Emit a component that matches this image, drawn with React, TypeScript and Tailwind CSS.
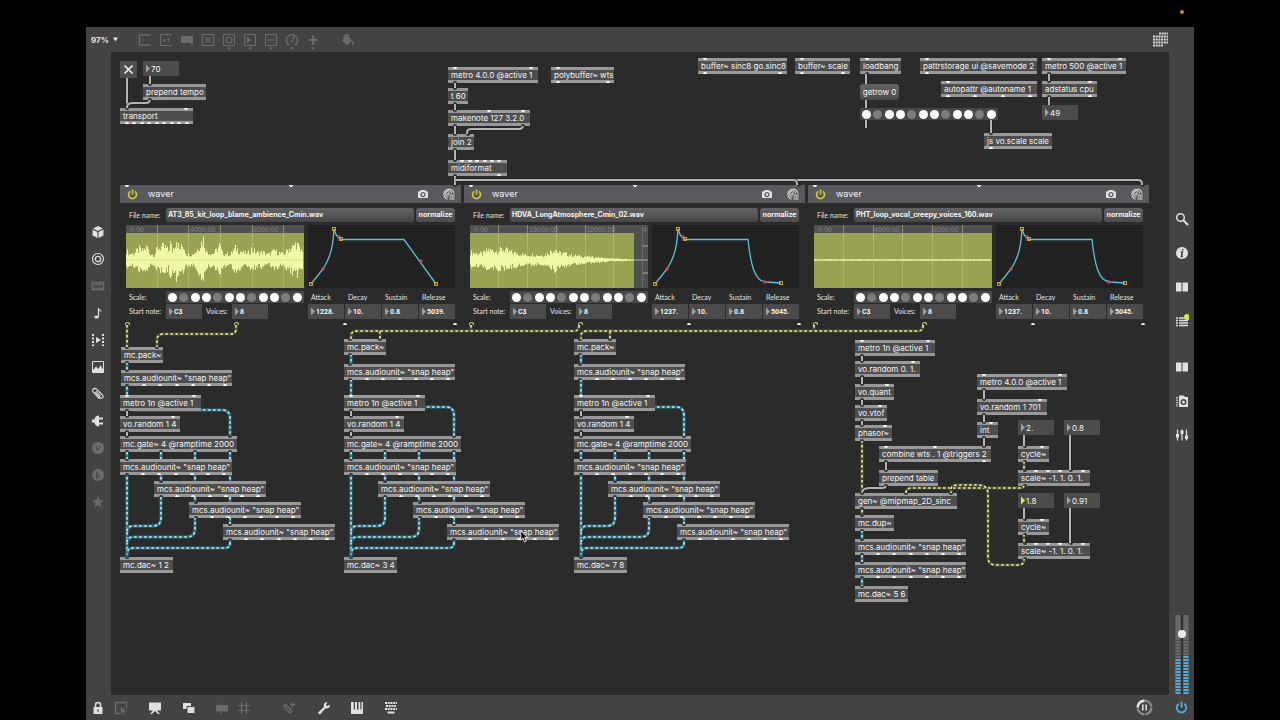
import type { ReactNode } from "react"

const ORIGIN = { x: 111, y: 52 }
const SCALE = [1, 0, 1, 1, 0, 1, 1, 0, 1, 1, 0, 1]
const AU = 'mcs.audiounit~ "snap heap"'
const AU_OUTS = [23, 39, 56, 72, 88, 104]

type Obj = {
  x: number
  y: number
  w: number
  text: string
  ins?: number[]
  outs?: number[]
  cin?: number[]
  cout?: number[]
}

type Kind = "data" | "audio" | "multi"
type Cord = { d: string; kind: Kind }

const at = (x: number, y: number) => ({ left: x - ORIGIN.x, top: y - ORIGIN.y })

function voice(dx: number, dy: number, dac: string): Obj[] {
  const x = 120 + dx
  const px = dx === 0 ? x + 1 : x
  return [
    { x: px, y: 347 + dy, w: 42, text: "mc.pack~", cin: [6, 36], cout: [6] },
    { x: px, y: 370 + dy * 0.75, w: 111, text: AU, cin: [6], cout: [6], outs: AU_OUTS },
    { x, y: 395, w: 81, text: "metro 1n @active 1", ins: [7, 74], cout: [7] },
    { x, y: 416, w: 60, text: "vo.random 1 4", cin: [7], ins: [53], cout: [7] },
    { x, y: 436, w: 117, text: "mc.gate~ 4 @ramptime 2000", cin: [7, 110], cout: [7, 41, 75, 110] },
    { x, y: 459, w: 112, text: AU, cin: [7], cout: [7], outs: AU_OUTS },
    { x: x + 34, y: 481, w: 112, text: AU, cin: [7], cout: [7], outs: AU_OUTS },
    { x: x + 69, y: 502, w: 112, text: AU, cin: [7], cout: [7], outs: AU_OUTS },
    { x: x + 103, y: 524, w: 112, text: AU, cin: [7], cout: [7], outs: AU_OUTS },
    { x, y: 557, w: 53, text: dac, cin: [7] },
  ]
}

function voiceCords(dx: number, dy: number): Cord[] {
  const a = 127 + dx
  const b = a + 34
  const c = a + 68
  const d = a + 103
  const gy = dx === 0 ? 410 : 407
  return [
    { kind: "multi", d: `M${a} ${362 + dy}V395` },
    { kind: "data", d: `M${a} 411V436` },
    { kind: "multi", d: `M${a + 6} ${gy}H${d - 8}Q${d} ${gy} ${d} ${gy + 8}V436` },
    { kind: "multi", d: `M${a} 452V557` },
    { kind: "multi", d: `M${b} 452V518Q${b} 526 ${b - 8} 526H${a + 6}Q${a} 526 ${a} 532` },
    { kind: "multi", d: `M${c} 452V529Q${c} 537 ${c - 8} 537H${a + 6}Q${a} 537 ${a} 543` },
    { kind: "multi", d: `M${d} 452V543Q${d} 548 ${d - 5} 548H${a + 6}Q${a} 548 ${a} 554` },
  ]
}

const objects: Obj[] = [
  { x: 143, y: 84, w: 63, text: "prepend tempo", cin: [7], cout: [7] },
  { x: 120, y: 108, w: 73, text: "transport", cin: [7], ins: [66], outs: [7, 14, 22, 29, 37, 44, 52, 59, 67] },
  { x: 448, y: 67, w: 90, text: "metro 4.0.0 @active 1", ins: [7, 83], cout: [7] },
  { x: 551, y: 67, w: 63, text: "polybuffer~ wts", ins: [7], outs: [7, 57] },
  { x: 448, y: 88, w: 20, text: "t 60", cin: [7], cout: [7] },
  { x: 448, y: 110, w: 82, text: "makenote 127 3.2.0", cin: [7], ins: [41, 75], cout: [7, 75] },
  { x: 448, y: 134, w: 26, text: "join 2", cin: [7, 20], cout: [7] },
  { x: 448, y: 160, w: 59, text: "midiformat", cin: [7], ins: [14, 22, 29, 37, 44, 51], cout: [7], outs: [51] },
  { x: 698, y: 58, w: 89, text: "buffer~ sinc8 go.sinc8", ins: [7], outs: [7, 82] },
  { x: 795, y: 58, w: 55, text: "buffer~ scale", ins: [7], outs: [7, 48] },
  { x: 860, y: 58, w: 41, text: "loadbang", ins: [7], cout: [7] },
  { x: 920, y: 58, w: 117, text: "pattrstorage ui @savemode 2", ins: [7], outs: [7] },
  { x: 941, y: 81, w: 96, text: "autopattr @autoname 1", ins: [7], outs: [7, 34, 62, 89] },
  { x: 984, y: 133, w: 68, text: "js vo.scale scale", cin: [7], outs: [7] },
  { x: 1042, y: 58, w: 84, text: "metro 500 @active 1", ins: [7, 78], cout: [7] },
  { x: 1042, y: 81, w: 55, text: "adstatus cpu", cin: [7], ins: [48], cout: [7], outs: [48] },
  ...voice(0, 0, "mc.dac~ 1 2"),
  ...voice(224, -8, "mc.dac~ 3 4"),
  ...voice(454, -8, "mc.dac~ 7 8"),
  { x: 855, y: 340, w: 80, text: "metro 1n @active 1", ins: [7, 73], cout: [7] },
  { x: 855, y: 361, w: 65, text: "vo.random 0. 1.", cin: [7], ins: [58], cout: [7] },
  { x: 855, y: 384, w: 39, text: "vo.quant", cin: [7], ins: [32], cout: [7] },
  { x: 855, y: 405, w: 32, text: "vo.vtof", cin: [7], ins: [25], cout: [7] },
  { x: 855, y: 425, w: 37, text: "phasor~", cin: [7], ins: [30], cout: [7] },
  { x: 879, y: 446, w: 112, text: "combine wts . 1 @triggers 2", ins: [7, 56], cin: [105], cout: [7], outs: [105] },
  { x: 879, y: 470, w: 59, text: "prepend table", cin: [7], cout: [7] },
  { x: 855, y: 493, w: 102, text: "gen~ @mipmap_2D_sinc", cin: [7, 51, 96], cout: [7] },
  { x: 855, y: 515, w: 39, text: "mc.dup~", cin: [7], cout: [7] },
  { x: 855, y: 539, w: 111, text: AU, cin: [7], cout: [7], outs: AU_OUTS },
  { x: 855, y: 562, w: 111, text: AU, cin: [7], cout: [7], outs: AU_OUTS },
  { x: 855, y: 586, w: 53, text: "mc.dac~ 5 6", cin: [7] },
  { x: 977, y: 374, w: 90, text: "metro 4.0.0 @active 1", ins: [7, 83], cout: [7] },
  { x: 977, y: 399, w: 70, text: "vo.random 1 701", cin: [7], ins: [63], cout: [7] },
  { x: 977, y: 422, w: 21, text: "int", cin: [7], ins: [14], cout: [7] },
  { x: 1018, y: 446, w: 31, text: "cycle~", cin: [7], ins: [24], cout: [7] },
  { x: 1018, y: 470, w: 72, text: "scale~ -1. 1. 0. 1.", cin: [7, 53], ins: [18, 30, 42, 65], cout: [7] },
  { x: 1018, y: 519, w: 31, text: "cycle~", cin: [7], ins: [24], cout: [7] },
  { x: 1018, y: 543, w: 72, text: "scale~ -1. 1. 0. 1.", cin: [7, 53], ins: [18, 30, 42, 65], cout: [7] },
]

const cords: Cord[] = [
  { kind: "data", d: "M127 77V109" },
  { kind: "data", d: "M150 76V85" },
  { kind: "data", d: "M150 99Q150 103 146 103H133Q127 103 127 107" },
  { kind: "data", d: "M455 82V188" },
  { kind: "data", d: "M523 125Q523 129 519 129H471Q467 129 467 133V136" },
  { kind: "data", d: "M455 180H1138Q1142 180 1142 184V186" },
  { kind: "data", d: "M793 180Q797 180 797 184V186" },
  { kind: "data", d: "M866 73V128" },
  { kind: "data", d: "M991 119V134" },
  { kind: "data", d: "M1049 73V106" },
  { kind: "audio", d: "M127 325V347" },
  { kind: "audio", d: "M236 325V329Q236 334 231 334H163Q157 334 157 340V347" },
  { kind: "audio", d: "M471 325V331" },
  { kind: "audio", d: "M579 325V326Q579 331 574 331H357Q351 331 351 336V340" },
  { kind: "audio", d: "M380 331V340" },
  { kind: "audio", d: "M814 325V331" },
  { kind: "audio", d: "M923 325V326Q923 331 918 331H587Q581 331 581 336V340" },
  { kind: "audio", d: "M610 331V340" },
  ...voiceCords(0, 0),
  ...voiceCords(224, -8),
  ...voiceCords(454, -8),
  { kind: "data", d: "M862 355V426" },
  { kind: "audio", d: "M862 440V516" },
  { kind: "multi", d: "M862 530V587" },
  { kind: "data", d: "M984 389V447" },
  { kind: "data", d: "M886 461V471" },
  { kind: "data", d: "M886 485Q886 488 882 488H870Q863 488 862 492" },
  { kind: "data", d: "M1024 434V447" },
  { kind: "audio", d: "M1024 461V471" },
  { kind: "data", d: "M1070 434V471" },
  { kind: "data", d: "M1024 507V520" },
  { kind: "audio", d: "M1024 534V544" },
  { kind: "data", d: "M1070 507V544" },
  { kind: "audio", d: "M1024 485Q1024 488 1020 488H911Q906 488 906 493" },
  { kind: "audio", d: "M1024 558V560Q1024 565 1018 565H996Q988 565 988 557V494Q988 485 978 485H957Q951 485 951 490V493" },
]

const numbers = [
  { x: 143, y: 61, value: "70" },
  { x: 1042, y: 105, value: "49" },
  { x: 1018, y: 420, value: "2." },
  { x: 1064, y: 420, value: "0.8" },
  { x: 1018, y: 493, value: "1.8", active: true },
  { x: 1064, y: 493, value: "0.91" },
]

function Ports({ list, edge, dark }: { list?: number[]; edge: "top" | "bottom"; dark?: boolean }) {
  return (
    <>
      {list?.map((p) => (
        <i
          key={p}
          className={`absolute h-[2px] w-1 ${edge === "top" ? "top-0 rounded-b-full" : "bottom-0 rounded-t-full"} ${
            dark ? "bg-[#333]" : "bg-white"
          }`}
          style={{ left: p - 2 }}
        />
      ))}
    </>
  )
}

function ObjectBox({ o }: { o: Obj }) {
  return (
    <div
      className="absolute h-4 whitespace-nowrap border-y-[3px] border-[#989898] bg-[#4e4e4e] pl-[3px] text-[8px] leading-[10px] text-[#f6f6f6]"
      style={{ ...at(o.x, o.y), width: o.w }}
    >
      {o.text}
      <div className="absolute inset-x-0 -inset-y-[3px]">
        <Ports list={o.ins} edge="top" />
        <Ports list={o.cin} edge="top" dark />
        <Ports list={o.outs} edge="bottom" />
        <Ports list={o.cout} edge="bottom" dark />
      </div>
    </div>
  )
}

const cordColors: Record<Kind, [string, string]> = {
  data: ["#1e1e1e", "#b4b4b0"],
  audio: ["#50532c", "#eef0b8"],
  multi: ["#2f7288", "#c9e8ee"],
}

function Cords() {
  return (
    <svg className="absolute left-0 top-0" width="1058" height="643" viewBox="111 52 1058 643" fill="none">
      {cords.map((c, i) => (
        <g key={i}>
          <path d={c.d} stroke={cordColors[c.kind][0]} strokeWidth={3} />
          <path
            d={c.d}
            stroke={cordColors[c.kind][1]}
            strokeWidth={c.kind === "data" ? 2 : 1.6}
            strokeDasharray={c.kind === "data" ? undefined : "2.5 2.5"}
          />
        </g>
      ))}
    </svg>
  )
}

function NumberBox({ label, value, bold, active }: { label: string; value: string; bold?: boolean; active?: boolean }) {
  return (
    <div className="flex h-[15px] w-9 items-center bg-[#4b4b4b]">
      <svg width="8" height="9" viewBox="0 0 8 9" className="shrink-0">
        <path d="M3 0.5 7 4.5 3 8.5Z" fill={active ? "#dcee4a" : "#a0a0a0"} />
      </svg>
      <input
        aria-label={label}
        defaultValue={value}
        className={`w-7 min-w-0 bg-transparent p-0 leading-[10px] text-[#f6f6f6] outline-none ${
          bold ? "font-['Roboto',sans-serif] text-[7px] font-bold" : "text-[8px]"
        }`}
      />
    </div>
  )
}

function ScaleRow({ name }: { name: string }) {
  return (
    <div className="flex h-3 w-[138px] items-center justify-around bg-[#474747] px-px">
      {SCALE.map((on, i) => (
        <input
          key={i}
          type="checkbox"
          aria-label={`${name} note ${i + 1}`}
          defaultChecked={on === 1}
          className="size-[9px] appearance-none rounded-full bg-[#7c7c7c] checked:bg-white"
        />
      ))}
    </div>
  )
}

type WaverProps = {
  x: number
  file: string
  wave: number[][]
  grid: number[]
  ticks: [number, string][]
  selection: number
  attack: string
  release: string
  linear?: boolean
}

// same value for the same x, so the wave shape is stable between renders
function noise(n: number) {
  const v = Math.sin(n * 12.9898) * 43758.5453
  return v - Math.floor(v)
}

function wavePath(points: number[][]) {
  let d = ""
  for (let i = 1; i < points.length; i++) {
    const [x0, a0] = points[i - 1]
    const [x1, a1] = points[i]
    for (let x = x0; x < x1; x++) {
      const amp = a0 + ((a1 - a0) * (x - x0)) / (x1 - x0)
      const up = amp * (0.45 + 0.6 * noise(x))
      const down = amp * (0.4 + 0.55 * noise(x + 400))
      d += `M${x + 0.5} ${(35 - up).toFixed(1)}V${(35 + down).toFixed(1)}`
    }
  }
  return d
}

const wavers: WaverProps[] = [
  {
    x: 120,
    file: "AT3_85_kit_loop_blame_ambience_Cmin.wav",
    wave: [
      [0, 12], [3, 8], [8, 9], [13, 14], [16, 12], [21, 17], [23, 9], [28, 6], [31, 15], [35, 17], [39, 16], [42, 12],
      [44, 22], [46, 12], [50, 28], [53, 14], [57, 19], [60, 8], [66, 7], [70, 12], [75, 23], [77, 27], [80, 11],
      [86, 8], [90, 12], [93, 19], [96, 9], [104, 7], [109, 15], [113, 12], [118, 9], [121, 8], [125, 14], [131, 9],
      [136, 10], [142, 7], [148, 12], [153, 9], [157, 7], [162, 14], [167, 17], [170, 22], [174, 12], [177, 16],
    ],
    grid: [31, 62, 94, 126, 157],
    ticks: [[2, "-0.00"], [64, "4000.00 :"], [127, "8000.00 :"]],
    selection: 177,
    attack: "1228.",
    release: "5039.",
    linear: true,
  },
  {
    x: 464,
    file: "HDVA_LongAtmosphere_Cmin_02.wav",
    wave: [
      [0, 10], [5, 9], [12, 8], [18, 13], [22, 12], [28, 12], [33, 14], [38, 11], [44, 9], [50, 8], [56, 6], [62, 7],
      [70, 6], [76, 7], [80, 11], [85, 15], [88, 9], [95, 8], [102, 6], [110, 5], [120, 4], [130, 3], [140, 2],
      [150, 1.5], [158, 1], [164, 0.6],
    ],
    grid: [28, 57, 86, 115, 143, 172],
    ticks: [[2, "-0.00"], [59, "16000.00"], [116, "32000.00"], [173, "4"]],
    selection: 164,
    attack: "1237.",
    release: "5045.",
  },
  {
    x: 808,
    file: "PHT_loop_vocal_creepy_voices_160.wav",
    wave: [[0, 1], [177, 1]],
    grid: [29, 59, 88, 118, 148],
    ticks: [[2, "-0.00"], [60, "4000.00"], [119, "8000.00"]],
    selection: 177,
    attack: "1237.",
    release: "5045.",
  },
]

function Waveform({ wave, grid, ticks, selection }: WaverProps) {
  return (
    <svg width="178" height="63" viewBox="0 0 178 63" className="bg-[#505050]">
      {ticks.map(([x, t]) => (
        <text key={t} x={x} y="7" className="fill-[#838383] font-['Liberation_Sans',sans-serif] text-[7px]">
          {t}
        </text>
      ))}
      <rect x="0" y="8" width={selection === 177 ? 178 : selection} height="55" fill="#99a252" />
      {grid.map((x) => (
        <path key={x} d={`M${x + 0.5} 0V63`} stroke={x > selection ? "#858585" : "#c4cb88"} strokeOpacity="0.5" />
      ))}
      {selection < 177 && <path d="M164 35H178M173 21H178M173 48H178" stroke="#a9a9a9" />}
      <path d={wavePath(wave)} stroke="#eff8a4" strokeWidth="1.1" />
      {selection === 177 && <path d="M0 35H177" stroke="#d8e47c" />}
    </svg>
  )
}

function Envelope({ linear }: { linear?: boolean }) {
  const tail = linear ? "L128 59" : "C99 42 103 56 114 57L129 58"
  const handles = [[3, 59], [26, 4], [33, 14], linear ? [128, 59] : [129, 58]]
  const bends = [[15, 44], [31, 12], linear ? [113, 36] : [113, 57]]
  return (
    <svg width="147" height="63" viewBox="0 0 147 63" fill="none" className="bg-[#222]">
      <path d={`M3 59L15 44C23 32 25 20 26 4Q28 12 33 14.5H96${tail}`} stroke="#5cc0d6" strokeWidth="1.3" />
      {bends.map(([x, y]) => (
        <circle key={x} cx={x} cy={y} r="1.7" fill="#c8475c" />
      ))}
      {handles.map(([x, y]) => (
        <rect key={x} x={x - 1.5} y={y - 1.5} width="3" height="3" stroke="#d0a030" strokeWidth="1" />
      ))}
    </svg>
  )
}

function PowerIcon({ className, size = 11 }: { className: string; size?: number }) {
  return (
    <svg width={size} height={size} viewBox="0 0 12 12" fill="none" stroke="currentColor" strokeWidth="1.7" className={className}>
      <path d="M3.4 2.6A4.4 4.4 0 1 0 8.6 2.6M6 0.5V6" />
    </svg>
  )
}

function Waver(props: WaverProps) {
  const { x, file, attack, release } = props
  const params = [
    ["Attack", attack],
    ["Decay", "10."],
    ["Sustain", "0.8"],
    ["Release", release],
  ]
  return (
    <section className="absolute w-[341px] font-['Lato',sans-serif] text-[7px] text-[#e4e4e4]" style={at(x, 185)}>
      <header className="relative flex h-[18px] items-center bg-[#5a595d] pl-[7px] pr-[6px]">
        <PowerIcon className="text-[#d3cc3a]" />
        <h2 className="ml-[10px] font-['Inter',sans-serif] text-[9px] text-[#f2f2f2]">waver</h2>
        <button aria-label="Snapshot" className="ml-auto mr-[14px]">
          <svg width="12" height="10" viewBox="0 0 12 10">
            <path
              fillRule="evenodd"
              d="M4 1H8L9 2.2H10Q11 2.2 11 3.2V8Q11 9 10 9H2Q1 9 1 8V3.2Q1 2.2 2 2.2H3ZM6 3A2.6 2.6 0 1 0 6 8.2A2.6 2.6 0 1 0 6 3ZM6 4.2A1.4 1.4 0 1 1 6 7A1.4 1.4 0 1 1 6 4.2Z"
              fill="#e2e2e2"
            />
          </svg>
        </button>
        <button aria-label="Presets">
          <svg width="12" height="12" viewBox="0 0 12 12" fill="none" stroke="#dedede" strokeWidth="1.1">
            <path d="M4.5 11A5 5 0 1 1 11 5.5M5 8.7A3 3 0 1 1 8.6 5M6 7A1 1 0 1 1 6.6 5.5M6.5 7H11.5M6.5 9H11.5M6.5 11H11.5" />
          </svg>
        </button>
        <Ports list={[7, 171]} edge="top" />
        <Ports list={[335]} edge="top" dark />
      </header>
      <div className="mt-[5px] flex h-[14px] items-center pl-[9px]">
        <span className="w-[37px]">File name:</span>
        <button className="h-full w-[248px] rounded-[3px] bg-linear-to-b from-[#636363] to-[#484848] pl-[2px] text-left font-['Inter',sans-serif] font-bold text-[#f4f4f4]">
          {file}
        </button>
        <button className="ml-[2px] h-full w-[39px] rounded-[3px] bg-linear-to-b from-[#636363] to-[#4c4c4c] font-['Inter',sans-serif] font-bold text-[#f4f4f4]">
          normalize
        </button>
      </div>
      <div className="mt-[3px] flex gap-1 pl-[6px]">
        <Waveform {...props} />
        <Envelope linear={props.linear} />
      </div>
      <div className="mt-[3px] flex gap-1 pl-[6px]">
        <div className="w-[178px] pl-[3px]">
          <div className="flex items-center">
            <span className="w-[37px]">Scale:</span>
            <ScaleRow name={file} />
          </div>
          <div className="mt-px flex items-center">
            <span className="w-[37px] whitespace-nowrap">Start note:</span>
            <NumberBox label="Start note" value="C3" bold />
            <span className="ml-[4px] w-[26px]">Voices:</span>
            <NumberBox label="Voices" value="8" bold />
          </div>
        </div>
        <div className="flex gap-px">
          {params.map(([name, value]) => (
            <label key={name}>
              <span className="block h-3 pl-[3px] leading-3">{name}</span>
              <div className="mt-px">
                <NumberBox label={name} value={value} bold />
              </div>
            </label>
          ))}
        </div>
      </div>
      <div className="relative mt-[4px] h-[2px]">
        <Ports list={[225, 335]} edge="bottom" />
        {[7, 116].map((p) => (
          <i
            key={p}
            className="absolute bottom-0 h-[3px] w-[5px] rounded-t-full border border-b-0 border-[#c9cd7c]"
            style={{ left: p - 2 }}
          />
        ))}
      </div>
    </section>
  )
}

function Icon({ children, dim, size = 14 }: { children: ReactNode; dim?: boolean; size?: number }) {
  return (
    <svg width={size} height={size} viewBox="0 0 14 14" fill="none" stroke="currentColor" className={dim ? "text-[#6c6c6c]" : "text-[#e0e0e0]"}>
      {children}
    </svg>
  )
}

function ToolButton({ label, className = "", children }: { label: string; className?: string; children: ReactNode }) {
  return (
    <button aria-label={label} className={`flex items-center justify-center ${className}`}>
      {children}
    </button>
  )
}

const caret = <path d="M5 14.5H9L7 17Z" fill="currentColor" stroke="none" />

const toolbar: [string, ReactNode][] = [
  ["Object", <path d="M1.5 1V13M3 2H12.500M3 12H12.500" strokeWidth="1.400" />],
  ["Message", <path d="M12.5 1.5H1.5V12.5H12.5M4 9 5.500 6 6.500 9M8 6H11M9.500 6V9" />],
  ["Comment", <path d="M1 3H13V10H12.500V12.500L10 10H1Z" fill="currentColor" stroke="none" />],
  ["Toggle", <path d="M1.5 1.5H12.5V12.5H1.5ZM4.500 4.500 9.500 9.500M9.500 4.500 4.500 9.500" strokeWidth="1.200" />],
  ["Button", <><path d="M1.5 1.5H12.5V12.5H1.5Z" /><circle cx="7" cy="7" r="3" strokeWidth="1.200" />{caret}</>],
  ["Number", <><path d="M1.5 1.5H12.5V12.5H1.5Z" /><path d="M4 4.500 7.500 7 4 9.500Z" fill="currentColor" />{caret}</>],
  ["Slider", <><path d="M1.5 1.5H12.5V12.5H1.5ZM3.500 7H10.500" />{caret}</>],
  ["Dial", <><path d="M4 12.200A5.700 5.700 0 1 1 10 12.200M6.500 9.500 9.500 3.500" strokeWidth="1.400" />{caret}</>],
  ["Add", <><path d="M7 2.500V11.500M2.500 7H11.500" strokeWidth="2.200" />{caret}</>],
]

const leftIcons: [string, ReactNode, boolean?][] = [
  ["Packages", <path d="M7 1 12 3.500 7 6 2 3.500ZM1.500 4.500 6.500 7V13L1.500 10.500ZM12.500 4.500 7.500 7V13L12.500 10.500Z" fill="currentColor" stroke="none" />],
  ["Objects", <><circle cx="7" cy="7" r="5.500" strokeWidth="1.200" /><circle cx="7" cy="7" r="2.700" strokeWidth="1.300" /></>],
  ["Devices", <path d="M1.500 3.500H12.500V10.500H1.500ZM3 5.500H11M3 9H4M5.500 9H6.500M8 9H9M10 9H11" strokeWidth="1.500" />, true],
  ["Audio", <><path d="M7.500 11V2Q8 4.500 10.500 5.500" strokeWidth="1.200" /><ellipse cx="5.500" cy="11" rx="2.200" ry="1.600" fill="currentColor" stroke="none" /></>],
  ["Video", <><path d="M2 1V13M12 1V13" strokeWidth="2" strokeDasharray="2 1.500" /><path d="M5 4 10 7 5 10Z" fill="currentColor" stroke="none" /></>],
  ["Images", <><path d="M1.500 1.500H12.500V12.500H1.500Z" /><path d="M2 12V10L5 6.500 7.500 9 9.500 5 12 9.500V12Z" fill="currentColor" stroke="none" /></>],
  ["Attachments", <path d="M4 5 9 10.500Q10.500 12 11.700 10.700 12.600 9.500 11.500 8.200L5.500 2Q3.800 .7 2.300 2 .9 3.500 2.300 5.200L8.500 11.800M9.500 9 5 4" strokeWidth="1.100" />],
  ["Plug-ins", <path d="M8 1.500V12.500Q4 12.500 3.500 8.500H1V5.500H3.500Q4 1.500 8 1.500ZM8 3.500H12V5.500H8ZM8 8.500H12V10.500H8Z" fill="currentColor" stroke="none" />],
  ["Vizzie", <><circle cx="7" cy="7" r="6" fill="currentColor" stroke="none" /><path d="M5 4.500 6 9.500Q9 8 9 5.500 8.500 4 7 5.200" stroke="#434343" /></>, true],
  ["Beap", <><circle cx="7" cy="7" r="6" fill="currentColor" stroke="none" /><path d="M6.500 3 5.300 10Q9 10.500 9 7.700 8.500 5.800 6 7.500" stroke="#434343" /></>, true],
  ["Favorites", <path d="M7 1 8.600 5.200 13 5.400 9.600 8.200 10.800 12.600 7 10.100 3.200 12.600 4.400 8.200 1 5.400 5.400 5.200Z" fill="currentColor" stroke="none" />, true],
]

const book = <path d="M1 2.500H6.500V11.500H1ZM7.500 2.500H13V11.500H7.500Z" fill="currentColor" stroke="none" />

const rightIcons: [string, ReactNode][] = [
  ["Search", <><circle cx="5.500" cy="5.500" r="3.800" strokeWidth="1.500" /><path d="M8.500 8.500 13 13" strokeWidth="2" /></>],
  ["Inspector", <><circle cx="7" cy="7" r="6" fill="currentColor" stroke="none" /><path d="M7.800 3V4.500M5.700 6H7.400L6.500 10.500H8" stroke="#434343" strokeWidth="1.500" /></>],
  ["Reference", book],
  ["Console", <><path d="M1 4H3M4 4H13M1 6.500H3M4 6.500H13M1 9H3M4 9H13M1 11.500H3M4 11.500H13" strokeWidth="1.300" /><circle cx="12" cy="3" r="3" fill="#d3e83c" stroke="none" /></>],
  ["Lessons", book],
  ["Snapshots", <><path fillRule="evenodd" d="M4 1.500H9L10 3H13V13H4ZM8.500 5A3 3 0 1 0 8.500 11A3 3 0 1 0 8.500 5ZM8.500 6.500A1.500 1.500 0 1 1 8.500 9.500A1.500 1.500 0 1 1 8.500 6.500Z" fill="currentColor" stroke="none" /><path d="M2 3V13" strokeWidth="1.600" strokeDasharray="1.400 1" /></>],
  ["Mixer", <><path d="M2.500 1.500V12.500M7 1.500V12.500M11.500 1.500V12.500" strokeWidth="1.200" /><path d="M2.500 6V9.500M7 2.500V6M11.500 7.500V11" strokeWidth="3" /></>],
]

// [label, icon, dimmed, left gap]
const bottomIcons: [string, ReactNode, boolean, string][] = [
  ["Lock", <><path d="M2.500 6H11.500V13H2.500Z" fill="currentColor" stroke="none" /><path d="M4.500 6V4Q4.500 1.500 7 1.500 9.500 1.500 9.500 4V6" strokeWidth="1.500" /><path d="M7 8V11" stroke="#434343" /></>, false, "ml-[5px]"],
  ["Operate while unlocked", <><path d="M7 12.500H1.500V1.500H12.500V7" strokeWidth="1.300" /><path d="M6.500 5.500 12 10 10 10.500 11.500 13 10.500 13.500 9 11 7.500 12.500Z" fill="currentColor" stroke="none" /></>, true, "ml-[9px]"],
  ["Presentation", <path d="M1 1.500H13V9.500H9L12 13H10L7 10 4 13H2L5 9.500H1Z" fill="currentColor" stroke="none" />, false, "ml-[20px]"],
  ["New view", <><path d="M1 2H9V8H1Z" fill="currentColor" stroke="none" /><path d="M5 5.500H13V12.500H5Z" fill="currentColor" stroke="#434343" /></>, false, "ml-[20px]"],
  ["Align", <><path d="M1 4H13V10.500H1Z" fill="currentColor" stroke="none" /><path d="M6 2V5M6 10V13" /></>, true, "ml-[19px]"],
  ["Grid", <path d="M4.500 1V13M9.500 1V13M1 4.500H13M1 9.500H13" strokeWidth="1.200" />, true, "ml-[8px]"],
  ["Probe", <path d="M2 5 6.500 10.500Q8 12.500 9.200 11.300 10 10 8.500 8.500L5 4.500Q3.500 3 2.300 4 1.500 5 2.500 6.500M10.500 1V6M8 3.500H13" strokeWidth="1.300" />, true, "ml-[31px]"],
  ["Tools", <path d="M1.500 11 7 6Q6 3 8 1.800 9.500 1 10.500 1.500L8.800 3.500 10.500 5.200 12.700 3.500Q13.300 5.500 12 6.800 10.500 8 8.500 7.300L3.500 13Q2.500 13.500 1.500 12.500 .9 11.700 1.500 11Z" fill="currentColor" stroke="none" />, false, "ml-[21px]"],
  ["Audio keys", <path d="M1 1H3.800V8.500H5V1H7V8.500H8.500V1H10.300V8.500H11.500V1H13V13H1Z" fill="currentColor" stroke="none" />, false, "ml-[19px]"],
  ["Keyboard", <><path d="M1 2H13M2 5H12M1 8H13" strokeWidth="2" strokeDasharray="2 .7" /><path d="M3.500 11.500H10.500" strokeWidth="2" /></>, false, "ml-[20px]"],
]

function LevelMeter() {
  return (
    <label className="relative mt-auto mb-px block">
      <svg width="16" height="79" viewBox="0 0 16 79">
        <path d="M4 0V79M12 0V79" stroke="#6a6a6a" strokeWidth="5" />
        <path d="M4 25V79M12 25V79" stroke="#4a4a4a" strokeWidth="5" strokeDasharray="1 2" />
        <path d="M4 79V44M12 79V41" stroke="#55a9da" strokeWidth="5" strokeDasharray="2 1" />
        <path d="M8 0V79" stroke="#333" strokeWidth="2" />
        <circle cx="8" cy="19" r="4" fill="#ededed" />
      </svg>
      <input type="range" aria-label="Output level" defaultValue={76} className="absolute inset-0 h-full w-full opacity-0" />
    </label>
  )
}

export default function App() {
  return (
    <div className="flex min-h-screen flex-col bg-black px-[86px] font-['Inter',sans-serif]">
      <div className="flex h-[27px] items-start justify-end pr-[10px] pt-[10px]">
        <span className="size-1 rounded-full bg-[#d9822b]" />
      </div>
      <div className="flex flex-1 flex-col bg-[#434343]">
        <header className="flex h-[25px] items-center">
          <button className="ml-[5px] flex w-[47px] items-center gap-1 text-[8px] font-bold text-[#e6e6e6]">
            97%
            <svg width="5" height="5" viewBox="0 0 5 5">
              <path d="M0 .5H5L2.500 4.500Z" fill="currentColor" />
            </svg>
          </button>
          <div className="flex gap-[7px]">
            {toolbar.map(([label, icon]) => (
              <ToolButton key={label} label={label}>
                <svg width="14" height="17" viewBox="0 0 14 17" fill="none" stroke="currentColor" className="mt-[3px] text-[#6c6c6c]">
                  {icon}
                </svg>
              </ToolButton>
            ))}
          </div>
          <ToolButton label="Format palette" className="ml-[21px]">
            <Icon dim>
              <path d="M1 7.500 6 2.500 11 7.500 6 12.500Z" fill="currentColor" stroke="none" />
              <path d="M3 6.500Q3 1.500 6 1.500 8 2 8 4.500M12 8V12" strokeWidth="1.300" />
            </Icon>
          </ToolButton>
          <ToolButton label="Patcher windows" className="ml-auto mr-[26px]">
            <svg width="16" height="15" viewBox="0 0 16 15" fill="none" stroke="#dadada" strokeWidth="2">
              <path d="M7 1.500H16M1 4.500H16M1 7.500H16M1 10.500H16M1 13.500H11" strokeDasharray="2 .7" />
            </svg>
          </ToolButton>
        </header>

        <div className="flex flex-1">
          <nav className="flex w-[25px] flex-col pr-px pt-[166px]">
            {leftIcons.map(([label, icon, dim]) => (
              <ToolButton key={label} label={label} className="h-[27px]">
                <Icon dim={dim}>{icon}</Icon>
              </ToolButton>
            ))}
          </nav>

          <main className="relative min-h-[643px] flex-1 overflow-hidden rounded-b-[2px] bg-[#2b2b2b]">
            <Cords />
            {wavers.map((w) => (
              <Waver key={w.x} {...w} />
            ))}
            {objects.map((o, i) => (
              <ObjectBox key={i} o={o} />
            ))}
            <label className="absolute flex size-[17px] items-center justify-center bg-[#4e4e4e]" style={at(120, 61)}>
              <input type="checkbox" aria-label="Transport" defaultChecked className="absolute size-full opacity-0" />
              <svg width="11" height="11" viewBox="0 0 11 11" stroke="#fff" strokeWidth="1.500">
                <path d="M1.500 1.500 9.500 9.500M9.500 1.500 1.500 9.500" />
              </svg>
            </label>
            {numbers.map((n) => (
              <div key={`${n.x}-${n.y}`} className="absolute" style={at(n.x, n.y)}>
                <NumberBox label="Number" value={n.value} active={n.active} />
              </div>
            ))}
            <button
              className="absolute h-4 w-[39px] rounded-[3px] bg-linear-to-b from-[#666] to-[#4a4a4a] text-[8px] leading-4 text-[#f6f6f6]"
              style={at(860, 84)}
            >
              getrow 0
            </button>
            <div className="absolute" style={at(860, 108)}>
              <ScaleRow name="Root scale" />
            </div>
            <svg width="9" height="13" viewBox="0 0 9 13" className="absolute" style={at(520, 530)}>
              <path d="M.7 .7V10L2.900 8 4.500 12 6.300 11.200 4.700 7.500H7.800Z" fill="#111" stroke="#fff" strokeWidth=".8" />
            </svg>
          </main>

          <nav className="flex w-[25px] flex-col items-center pt-[150px]">
            {rightIcons.map(([label, icon], i) => (
              <ToolButton key={label} label={label} className={i === 4 ? "mt-3 h-[34px]" : "h-[34px]"}>
                <Icon>{icon}</Icon>
              </ToolButton>
            ))}
            <LevelMeter />
          </nav>
        </div>

        <footer className="flex h-[25px] items-center">
          {bottomIcons.map(([label, icon, dim, gap]) => (
            <ToolButton key={label} label={label} className={gap}>
              <Icon dim={dim}>{icon}</Icon>
            </ToolButton>
          ))}
          <ToolButton label="CPU usage" className="ml-auto">
            <svg width="17" height="17" viewBox="0 0 17 17" fill="none" strokeWidth="2.400">
              <circle cx="8.500" cy="8.500" r="6.800" stroke="#8a8a8a" strokeDasharray="9.500 1.200" />
              <path d="M1.700 8.500A6.800 6.800 0 0 1 8.500 1.700" stroke="#e4e4e4" />
              <path d="M6.800 5.500V11.500M10.200 5.500V11.500" stroke="#dcdcdc" strokeWidth="1.600" />
            </svg>
          </ToolButton>
          <ToolButton label="Audio on" className="ml-[22px] mr-[6px]">
            <PowerIcon size={13} className="text-[#55a9da]" />
          </ToolButton>
        </footer>
      </div>
    </div>
  )
}
